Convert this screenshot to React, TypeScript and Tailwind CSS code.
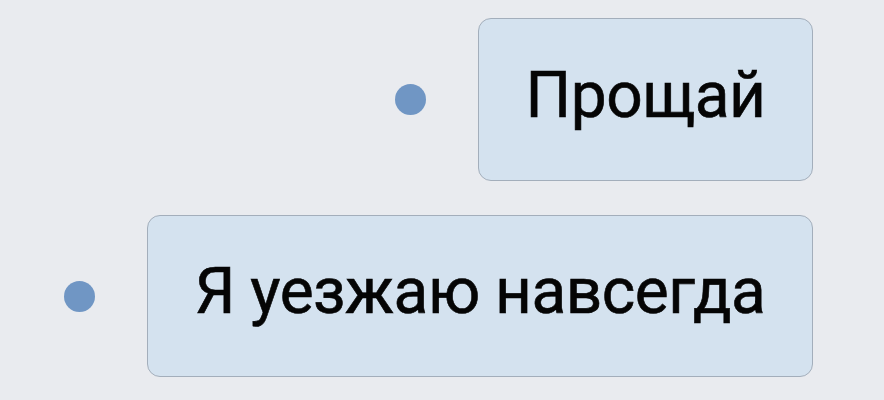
export default function App() {
  const rows = [
    { text: "Прощай", bubble: "w-[335px] h-[163px]" },
    { text: "Я уезжаю навсегда", bubble: "w-[666px] h-[162px]" },
  ];
  return (
    <div
      className="w-[884px] h-[400px] bg-[#e9ebef] flex flex-col items-end pt-[18px] pr-[71px] gap-[34px] overflow-hidden"
      style={{ fontFamily: "Roboto, 'Noto Sans', sans-serif" }}
    >
      {rows.map((r) => (
        <div key={r.text} className="flex items-center gap-[52px]">
          <span className="block w-[31px] h-[31px] rounded-full bg-[#7096c4]" />
          <div
            className={`${r.bubble} flex items-center justify-center pb-[8px] rounded-[13px] border border-[#a3aebb] bg-[#d4e2ef] text-[#050505] text-[64px] font-normal tracking-[-0.5px] leading-none [-webkit-text-stroke:0.6px_#050505]`}
          >
            {r.text}
          </div>
        </div>
      ))}
    </div>
  );
}
